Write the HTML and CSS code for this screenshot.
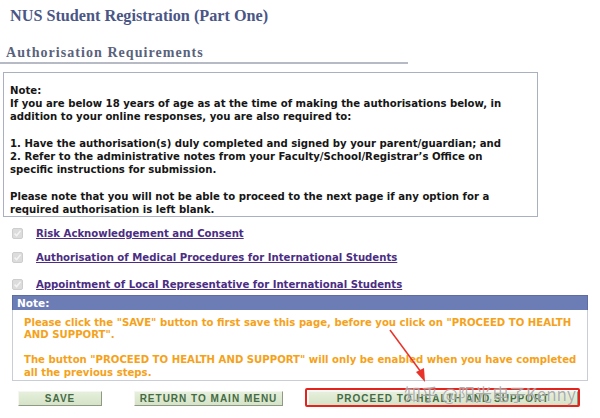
FILE: index.html
```html
<!DOCTYPE html>
<html>
<head>
<meta charset="utf-8">
<link rel="stylesheet" href="styles.css">
</head>
<body>
<div class="page">
  <h1 class="title">NUS Student Registration (Part One)</h1>
  <h2 class="section">Authorisation Requirements</h2>
  <div class="note">
    <p>Note:<br>If you are below 18 years of age as at the time of making the authorisations below, in<br>addition to your online responses, you are also required to:</p>
    <p>1. Have the authorisation(s) duly completed and signed by your parent/guardian; and<br>2. Refer to the administrative notes from your Faculty/School/Registrar’s Office on<br>specific instructions for submission.</p>
    <p>Please note that you will not be able to proceed to the next page if any option for a<br>required authorisation is left blank.</p>
  </div>
  <ul class="auth-list">
    <li class="auth-row first">
      <svg class="cb" width="11" height="11" viewBox="0 0 11 11"><rect x="0.5" y="0.5" width="10" height="10" rx="1.5" fill="#dcdcdc" stroke="#cdcdcd"/><path d="M2.6 5.6 L4.6 7.6 L8.6 2.8" fill="none" stroke="#f4f4f4" stroke-width="1.5"/></svg>
      <a href="#" class="auth-link">Risk Acknowledgement and Consent</a>
    </li>
    <li class="auth-row second">
      <svg class="cb" width="11" height="11" viewBox="0 0 11 11"><rect x="0.5" y="0.5" width="10" height="10" rx="1.5" fill="#dcdcdc" stroke="#cdcdcd"/><path d="M2.6 5.6 L4.6 7.6 L8.6 2.8" fill="none" stroke="#f4f4f4" stroke-width="1.5"/></svg>
      <a href="#" class="auth-link">Authorisation of Medical Procedures for International Students</a>
    </li>
    <li class="auth-row third">
      <svg class="cb" width="11" height="11" viewBox="0 0 11 11"><rect x="0.5" y="0.5" width="10" height="10" rx="1.5" fill="#dcdcdc" stroke="#cdcdcd"/><path d="M2.6 5.6 L4.6 7.6 L8.6 2.8" fill="none" stroke="#f4f4f4" stroke-width="1.5"/></svg>
      <a href="#" class="auth-link">Appointment of Local Representative for International Students</a>
    </li>
  </ul>
  <div class="panel">
    <div class="panel-head">Note:</div>
    <div class="panel-body">
      <p>Please click the "SAVE" button to first save this page, before you click on "PROCEED TO HEALTH<br>AND SUPPORT".</p>
      <p>The button "PROCEED TO HEALTH AND SUPPORT" will only be enabled when you have completed<br>all the previous steps.</p>
    </div>
  </div>
  <div class="buttons">
    <button class="btn btn-save">SAVE</button>
    <button class="btn btn-return">RETURN TO MAIN MENU</button>
    <button class="btn btn-proceed">PROCEED TO HEALTH AND SUPPORT</button>
  </div>

  <div class="highlight"></div>
  <svg class="arrow" width="600" height="418" viewBox="0 0 600 418">
    <line x1="390" y1="330" x2="421" y2="372" stroke="#e8322a" stroke-width="1.5"/>
    <polygon points="425,382 416,372 424,368" fill="#e8322a"/>
  </svg>
  <div class="watermark">知乎 @阳光电子Kenny</div>
</div>
</body>
</html>
```

FILE: styles.css
```css
html, body {
  margin: 0;
  padding: 0;
  background: #ffffff;
}

.page {
  position: relative;
  width: 600px;
  height: 418px;
  overflow: hidden;
  font-family: "DejaVu Sans", "Noto Sans", sans-serif;
}

.title {
  margin: 0;
  padding: 6px 0 0 10px;
  height: 20px;
  font-family: "Liberation Serif", serif;
  font-weight: bold;
  font-size: 16.2px;
  line-height: 20px;
  color: #4a5686;
}

.section {
  margin: 19px 0 0 0;
  width: 402px;
  padding: 0 0 0 6px;
  height: 17px;
  border-bottom: 2px solid #b5bac5;
  font-family: "Liberation Serif", serif;
  font-weight: bold;
  font-size: 14px;
  line-height: 15px;
  letter-spacing: 1.05px;
  color: #59627c;
}

.note {
  margin: 8px 0 0 3px;
  width: 521px;
  padding: 11px 6px 0 6px;
  height: 132px;
  border: 1px solid #a9b0bf;
  font-weight: bold;
  font-size: 10.15px;
  line-height: 13.2px;
  color: #161616;
  white-space: nowrap;
}

.note p {
  margin: 0 0 13.2px 0;
}

.note p:last-child {
  margin-bottom: 0;
}

.auth-list {
  list-style: none;
  margin: 0;
  padding: 0;
}

.auth-row {
  display: flex;
  align-items: center;
  gap: 13px;
  padding-left: 12px;
  height: 14px;
}

.auth-row.first { margin-top: 9.5px; }
.auth-row.second { margin-top: 9.5px; }
.auth-row.third { margin-top: 13px; }

.cb {
  flex: none;
}

.auth-link {
  font-weight: bold;
  font-size: 10.15px;
  color: #4b2d83;
  text-decoration: underline;
}

.panel {
  margin: 4px 0 0 12px;
  width: 576px;
}

.panel-head {
  height: 15px;
  background: #6c7db6;
  border: 1px solid #5d6da3;
  border-bottom: none;
  box-sizing: border-box;
  padding-left: 4px;
  color: #ffffff;
  font-weight: bold;
  font-size: 10.5px;
  line-height: 15px;
}

.panel-body {
  border: 1px solid #c9cdd6;
  border-top: none;
  padding: 7px 3px 1px 11px;
  color: #f5a21b;
  font-weight: bold;
  font-size: 10.15px;
  line-height: 12.4px;
  white-space: nowrap;
}

.panel-body p {
  margin: 0 0 12.4px 0;
}

.panel-body p:last-child {
  margin-bottom: 0;
}

.buttons {
  display: flex;
  margin: 10px 0 0 18px;
  gap: 0;
}

.btn {
  height: 15px;
  padding: 0;
  border: 1px solid;
  border-color: #f4f7ef #8e9a86 #8e9a86 #f4f7ef;
  background: linear-gradient(#e6efdc, #d5e3c7);
  color: #456b45;
  font-family: "Liberation Sans", sans-serif;
  font-weight: bold;
  font-size: 10px;
  line-height: 13px;
  letter-spacing: 1px;
  text-align: center;
}

.btn-save { width: 84px; }
.btn-return { width: 149px; margin-left: 32px; }
.btn-proceed { width: 270px; margin-left: 25px; }

.highlight {
  position: absolute;
  left: 305px;
  top: 388px;
  width: 271px;
  height: 15px;
  border: 2px solid #e3231c;
  border-radius: 2px;
}

.arrow {
  position: absolute;
  left: 0;
  top: 0;
  pointer-events: none;
}

.watermark {
  position: absolute;
  left: 404px;
  top: 384px;
  font-family: "Noto Sans CJK SC", sans-serif;
  font-size: 17px;
  line-height: 20px;
  color: rgba(120, 120, 120, 0.6);
  text-shadow: 0 0 1px rgba(255, 255, 255, 0.9);
  white-space: nowrap;
}
```
